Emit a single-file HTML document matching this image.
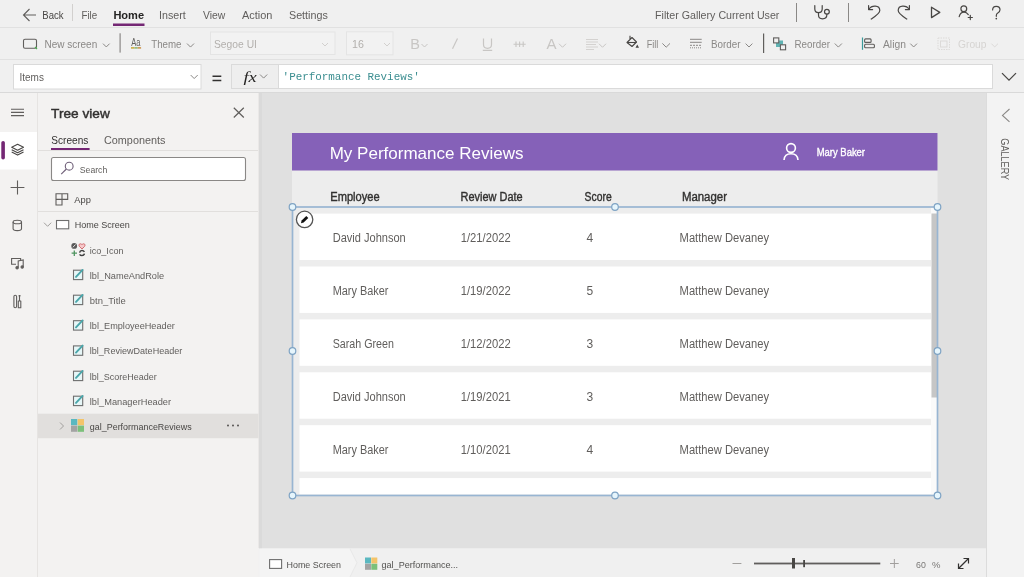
<!DOCTYPE html>
<html><head><meta charset="utf-8"><style>
*{margin:0;padding:0}html,body{width:1024px;height:577px;overflow:hidden;background:#f0f0f0}
svg{display:block;will-change:transform}text{white-space:pre}
</style></head><body>
<svg width="1024" height="577" viewBox="0 0 1024 577" font-family="Liberation Sans, sans-serif">
<rect x="0" y="0" width="1024" height="577" fill="#f0f0f0"/>
<rect x="0" y="27" width="1024" height="1" fill="#e1e1e1"/>
<rect x="0" y="59" width="1024" height="1" fill="#e1e1e1"/>
<rect x="0" y="92" width="1024" height="1" fill="#d9d9d9"/>
<path d="M23.5 15 H36 M29.5 9 L23.5 15 L29.5 21" fill="none" stroke="#605e5c" stroke-width="1.1"/>
<rect x="72" y="4" width="1" height="17" fill="#d2d0ce"/>
<rect x="113" y="23.5" width="31.5" height="2.5" fill="#742774"/>
<rect x="796" y="3" width="1" height="19" fill="#8a8886"/>
<g fill="none" stroke="#484644" stroke-width="1.2" stroke-linecap="round"><path d="M814.8 5.5 V9 Q814.8 12.6 818.5 12.6 Q822.2 12.6 822.2 9 V5.5"/><path d="M818.5 12.6 V15 Q818.5 18.8 822.5 18.8 Q826.9 18.8 826.9 14.2"/><circle cx="826.9" cy="11.7" r="2.4"/></g>
<rect x="848" y="3" width="1" height="19" fill="#8a8886"/>
<g fill="none" stroke="#484644" stroke-width="1.2" stroke-linecap="round" stroke-linejoin="round"><path d="M869 9.3 C871.5 5 879.8 4.8 879.8 10.5 C879.8 13.5 875 16.5 871.2 19"/><path d="M868.6 5.6 V9.6 H872.6"/></g>
<g fill="none" stroke="#484644" stroke-width="1.2" stroke-linecap="round" stroke-linejoin="round"><path d="M909 9.3 C906.5 5 898.2 4.8 898.2 10.5 C898.2 13.5 903 16.5 906.8 19"/><path d="M909.4 5.6 V9.6 H905.4"/></g>
<path d="M931.5 7.2 V17.6 L939.8 12.4 Z" fill="none" stroke="#484644" stroke-width="1.3" stroke-linejoin="round"/>
<g fill="none" stroke="#484644" stroke-width="1.2" stroke-linecap="round"><circle cx="963.8" cy="8.8" r="2.9"/><path d="M959.2 16.6 C960 13.5 962 12.2 964 12.2 C966 12.2 967.3 13.2 968.3 14.6"/><path d="M970.3 15.3 V19.6 M968.2 17.5 H972.4"/></g>
<path d="M992.6 10 Q992.6 6.3 996.3 6.3 Q1000 6.3 1000 9.8 Q1000 11.8 997.8 13 Q996.3 13.8 996.3 15.6 V16.3" fill="none" stroke="#484644" stroke-width="1.2" stroke-linecap="round"/><circle cx="996.3" cy="18.6" r="0.85" fill="#484644"/>
<rect x="23.5" y="39.3" width="13" height="9" rx="1.5" fill="none" stroke="#605e5c" stroke-width="1.1"/>
<path d="M35 47 L37 49" stroke="#4caf50" stroke-width="1.2"/>
<path d="M103 43.65 L106.30 46.95 L109.6 43.65" fill="none" stroke="#8a8886" stroke-width="1"/>
<rect x="119.5" y="33.3" width="1.2" height="19.3" fill="#8a8886"/>
<rect x="131" y="47.2" width="3.4" height="1.4" fill="#c9a227"/><rect x="134.4" y="47.2" width="3.3" height="1.4" fill="#7fb26a"/><rect x="137.7" y="47.2" width="3.4" height="1.4" fill="#c98a3a"/>
<path d="M187 43.55 L190.50 47.05 L194 43.55" fill="none" stroke="#8a8886" stroke-width="1"/>
<rect x="210.5" y="32" width="124.5" height="22.5" fill="#f2f2f2" stroke="#e4e4e4" stroke-width="1"/>
<path d="M322 43.00 L325.00 46.00 L328 43.00" fill="none" stroke="#d2d0ce" stroke-width="1"/>
<rect x="346.5" y="31.8" width="46.5" height="23" fill="#f2f2f2" stroke="#e4e4e4" stroke-width="1"/>
<path d="M384 43.00 L387.00 46.00 L390 43.00" fill="none" stroke="#d2d0ce" stroke-width="1"/>
<path d="M421.5 44.00 L424.50 47.00 L427.5 44.00" fill="none" stroke="#c8c6c4" stroke-width="1"/>
<path d="M457.5 38.5 L452.5 48.8" stroke="#c8c6c4" stroke-width="1.2"/>
<path d="M483.5 38.5 V44.5 Q483.5 48.3 487.5 48.3 Q491.5 48.3 491.5 44.5 V38.5 M482.8 50.3 H492.2" fill="none" stroke="#c8c6c4" stroke-width="1.2"/>
<path d="M513.5 44.3 H525.7 M516 41.5 V47 M519.6 41.5 V47 M523.2 41.5 V47" fill="none" stroke="#c8c6c4" stroke-width="1.1"/>
<path d="M559 43.75 L562.50 47.25 L566 43.75" fill="none" stroke="#c8c6c4" stroke-width="1"/>
<path d="M586 39.5 H598 M586 42 H598 M586 44.5 H596 M586 47 H598 M586 49.5 H594" fill="none" stroke="#d4d2d0" stroke-width="1"/>
<path d="M599 43.75 L602.50 47.25 L606 43.75" fill="none" stroke="#c8c6c4" stroke-width="1"/>
<g fill="none" stroke="#484644" stroke-width="1.1" stroke-linejoin="round"><path d="M630 35.8 V39.5 M627 42.5 L632 37.5 L636.5 42 L632 46.5 Z"/><path d="M627 42.5 H636.5"/></g>
<path d="M637.3 44.5 L635.5 47.8 H639 Z" fill="#484644"/>
<path d="M662.4 43.40 L666.20 47.20 L670 43.40" fill="none" stroke="#8a8886" stroke-width="1"/>
<g fill="none" stroke="#8a8886" stroke-width="1"><path d="M690 39.3 H701.7"/><path d="M690 42.3 H701.7"/><path d="M690 45.3 H701.7" stroke-dasharray="2 1"/><path d="M690 47.8 H701.7" stroke-dasharray="1 1"/></g>
<path d="M745.6 43.60 L749.00 47.00 L752.4 43.60" fill="none" stroke="#8a8886" stroke-width="1"/>
<rect x="763" y="33.5" width="1.2" height="19.5" fill="#605e5c"/>
<rect x="776" y="40.5" width="7" height="6.5" fill="#5fb3b3"/>
<rect x="773.6" y="37.9" width="5.2" height="5" fill="#f0f0f0" stroke="#605e5c" stroke-width="1.1"/>
<rect x="780.4" y="44.8" width="5.2" height="5" fill="#f0f0f0" stroke="#605e5c" stroke-width="1.1"/>
<path d="M834.8 43.52 L838.35 47.08 L841.9 43.52" fill="none" stroke="#8a8886" stroke-width="1"/>
<rect x="861.9" y="37.5" width="1.2" height="12.3" fill="#3a9a9a"/>
<rect x="864.6" y="38.9" width="6.5" height="3.5" rx="1" fill="none" stroke="#605e5c" stroke-width="1.1"/>
<rect x="864.6" y="44.2" width="9.8" height="3.5" rx="1" fill="none" stroke="#605e5c" stroke-width="1.1"/>
<path d="M910.3 43.62 L913.65 46.98 L917 43.62" fill="none" stroke="#8a8886" stroke-width="1"/>
<g fill="none" stroke="#dcdad8" stroke-width="1"><rect x="938" y="38" width="11.5" height="11.5" stroke-dasharray="1.5 1"/><rect x="940.5" y="41" width="6.5" height="6"/></g>
<path d="M991.4 43.65 L994.70 46.95 L998 43.65" fill="none" stroke="#dcdad8" stroke-width="1"/>
<rect x="13.5" y="64.5" width="187.5" height="24.5" fill="#ffffff" stroke="#dadada" stroke-width="1"/>
<path d="M190.7 75.05 L194.20 78.55 L197.7 75.05" fill="none" stroke="#8a8886" stroke-width="1"/>
<path d="M212.5 76.3 H221.3 M212.5 80.5 H221.3" stroke="#323130" stroke-width="1.5"/>
<rect x="231.5" y="64.5" width="47" height="24" fill="#eeeeee" stroke="#dadada" stroke-width="1"/>
<path d="M260 74.50 L263.60 78.10 L267.2 74.50" fill="none" stroke="#8a8886" stroke-width="1"/>
<rect x="278.5" y="64.5" width="714" height="24" fill="#ffffff" stroke="#dadada" stroke-width="1"/>
<path d="M1002 73.10 L1009.00 80.10 L1016 73.10" fill="none" stroke="#484644" stroke-width="1.3"/>
<rect x="0" y="93" width="37" height="484" fill="#f3f2f1"/>
<rect x="37" y="93" width="1" height="484" fill="#e6e4e2"/>
<rect x="0" y="132" width="37" height="37.5" fill="#ffffff"/>
<rect x="1.3" y="141" width="3.6" height="18.5" rx="1.8" fill="#742774"/>
<path d="M11 109.2 H24 M11 112.4 H24 M11 115.6 H24" stroke="#605e5c" stroke-width="1.1"/>
<g fill="none" stroke="#484644" stroke-width="1.1" stroke-linejoin="round"><path d="M17.6 144.3 L23.5 147.3 L17.6 150.3 L11.7 147.3 Z"/><path d="M11.7 149.7 L17.6 152.7 L23.5 149.7"/><path d="M11.7 152.1 L17.6 155.1 L23.5 152.1"/></g>
<path d="M17.5 180.6 V194.5 M10.6 187.5 H24.4" stroke="#605e5c" stroke-width="1.1"/>
<g fill="none" stroke="#605e5c" stroke-width="1.1"><ellipse cx="17.3" cy="222" rx="4.2" ry="1.8"/><path d="M13.1 222 V228.8 Q13.1 230.6 17.3 230.6 Q21.5 230.6 21.5 228.8 V222"/></g>
<g fill="none" stroke="#605e5c" stroke-width="1.1"><path d="M16 264.2 H11.6 V258.5 H20.6 V260"/><path d="M18.2 267.5 V261 L23.2 260 V266.8"/><circle cx="17.1" cy="267.8" r="1.2" fill="#605e5c"/><circle cx="22.2" cy="267" r="1.2" fill="#605e5c"/></g>
<g fill="none" stroke="#605e5c" stroke-width="1.1" stroke-linejoin="round"><path d="M13.9 296.5 Q13.9 295.2 15.2 295.2 Q16.6 295.2 16.6 296.5 V306.6 Q16.6 307.8 15.2 307.8 Q13.9 307.8 13.9 306.6 Z"/><path d="M19.5 295.2 V301"/><path d="M18.3 301 H20.8 V307.8 H18.3 Z"/></g>
<rect x="18.6" y="295.1" width="1.9" height="1.3" fill="#605e5c"/>
<rect x="38" y="93" width="220.5" height="484" fill="#f3f2f1"/>
<rect x="258.5" y="93" width="1" height="455" fill="#e1dfdd"/>
<path d="M233.8 107.8 L243.8 117.5 M243.8 107.8 L233.8 117.5" stroke="#605e5c" stroke-width="1.2"/>
<rect x="51" y="148" width="38.6" height="2.2" fill="#742774"/>
<rect x="38" y="150" width="220" height="1" fill="#e1dfdd"/>
<rect x="51.5" y="157.5" width="194" height="23" rx="2" fill="#ffffff" stroke="#8a8886" stroke-width="1.1"/>
<g fill="none" stroke="#6f5f78" stroke-width="1.1"><circle cx="69.2" cy="166.2" r="3.9"/><path d="M66.4 169 L61.2 174.2"/></g>
<g fill="none" stroke="#605e5c" stroke-width="1.1"><path d="M56 193.8 H62 V205 H56 Z M56 199.4 H62 M62 193.8 H67.7 V199.4 H62"/></g>
<rect x="38" y="211" width="220" height="1" fill="#e1dfdd"/>
<path d="M44 222.70 L47.60 226.30 L51.2 222.70" fill="none" stroke="#a19f9d" stroke-width="1"/>
<rect x="56.5" y="220.5" width="12.2" height="8.3" fill="#ffffff" stroke="#6e6e6e" stroke-width="1.1"/>
<circle cx="74.2" cy="245.9" r="2.9" fill="#5a5a5a"/><path d="M72.9 247.3 L75.5 244.5" stroke="#f3f2f1" stroke-width="0.9"/>
<path d="M82 249 L79.4 246.4 Q78.6 245 79.2 244.3 Q80.2 243.4 81.2 244 L82 244.7 L82.8 244 Q83.8 243.4 84.8 244.3 Q85.4 245 84.6 246.4 Z" fill="#f6c9cb" stroke="#d26f73" stroke-width="1"/>
<path d="M74.3 250.5 V255.9 M71.6 253.2 H77" stroke="#4f9460" stroke-width="1.3"/>
<path d="M79.6 252.6 Q80 250.6 82 250.6 Q83.6 250.6 84.4 251.8 M84.4 253.6 Q84 255.6 82 255.6 Q80.4 255.6 79.6 254.4" fill="none" stroke="#3f3f3f" stroke-width="1.5"/>
<rect x="73.5" y="270.20" width="9.2" height="9.4" fill="#e6f6f7" stroke="#6e6e6e" stroke-width="1.1"/>
<path d="M76 276.90 L82.6 269.90" stroke="#4aa6aa" stroke-width="1.9" stroke-linecap="round"/>
<rect x="73.5" y="295.20" width="9.2" height="9.4" fill="#e6f6f7" stroke="#6e6e6e" stroke-width="1.1"/>
<path d="M76 301.90 L82.6 294.90" stroke="#4aa6aa" stroke-width="1.9" stroke-linecap="round"/>
<rect x="73.5" y="320.70" width="9.2" height="9.4" fill="#e6f6f7" stroke="#6e6e6e" stroke-width="1.1"/>
<path d="M76 327.40 L82.6 320.40" stroke="#4aa6aa" stroke-width="1.9" stroke-linecap="round"/>
<rect x="73.5" y="345.90" width="9.2" height="9.4" fill="#e6f6f7" stroke="#6e6e6e" stroke-width="1.1"/>
<path d="M76 352.60 L82.6 345.60" stroke="#4aa6aa" stroke-width="1.9" stroke-linecap="round"/>
<rect x="73.5" y="371.20" width="9.2" height="9.4" fill="#e6f6f7" stroke="#6e6e6e" stroke-width="1.1"/>
<path d="M76 377.90 L82.6 370.90" stroke="#4aa6aa" stroke-width="1.9" stroke-linecap="round"/>
<rect x="73.5" y="396.20" width="9.2" height="9.4" fill="#e6f6f7" stroke="#6e6e6e" stroke-width="1.1"/>
<path d="M76 402.90 L82.6 395.90" stroke="#4aa6aa" stroke-width="1.9" stroke-linecap="round"/>
<rect x="38" y="413.7" width="220.5" height="24.5" fill="#e1dfdd"/>
<path d="M60 422.5 L63.5 426 L60 429.5" fill="none" stroke="#a19f9d" stroke-width="1"/>
<rect x="71" y="419" width="6.3" height="6.2" fill="#5bb8c0"/><rect x="77.7" y="419" width="6.3" height="6.2" fill="#f3c46a"/><rect x="71" y="425.6" width="6.3" height="6.2" fill="#a3a3a3"/><rect x="77.7" y="425.6" width="6.3" height="6.2" fill="#7cc07a"/>
<g fill="#484644"><circle cx="228" cy="425.5" r="0.9"/><circle cx="233" cy="425.5" r="0.9"/><circle cx="238" cy="425.5" r="0.9"/></g>
<rect x="259.5" y="93" width="727" height="455.5" fill="#e0e0e0"/>
<rect x="259" y="93" width="3" height="455.5" fill="#dadada"/>
<rect x="292" y="133" width="645.5" height="363" fill="#ededed"/>
<rect x="292" y="133" width="645.5" height="37.5" fill="#8561b8"/>
<g fill="none" stroke="#ffffff" stroke-width="1.6"><circle cx="791" cy="148" r="4.4"/><path d="M784 160 Q784.5 153.8 791 153.8 Q797.5 153.8 798 160"/></g>
<rect x="299.5" y="213.60" width="632" height="46.40" fill="#ffffff"/>
<rect x="299.5" y="266.50" width="632" height="46.40" fill="#ffffff"/>
<rect x="299.5" y="319.40" width="632" height="46.40" fill="#ffffff"/>
<rect x="299.5" y="372.30" width="632" height="46.40" fill="#ffffff"/>
<rect x="299.5" y="425.20" width="632" height="46.40" fill="#ffffff"/>
<rect x="299.5" y="478.10" width="632" height="16.40" fill="#ffffff"/>
<rect x="931" y="208" width="6.5" height="287" fill="#fafafa"/>
<rect x="931.5" y="213.5" width="5.5" height="184" fill="#c6c6c6"/>
<rect x="259.5" y="548.5" width="727" height="28.5" fill="#f0f0f0"/>
<path d="M259.5 548.8 H350 L357 562.8 L350 577 H259.5 Z" fill="#f4f4f4"/>
<path d="M350 548.8 L357 562.8 L350 577" fill="none" stroke="#e8e8e8" stroke-width="1"/>
<rect x="269.6" y="559.6" width="12" height="8.8" fill="#ffffff" stroke="#6e6e6e" stroke-width="1.1"/>
<rect x="365" y="557.5" width="6" height="6" fill="#5bb8c0"/><rect x="371.3" y="557.5" width="6" height="6" fill="#f3c46a"/><rect x="365" y="563.8" width="6" height="6" fill="#a3a3a3"/><rect x="371.3" y="563.8" width="6" height="6" fill="#7cc07a"/>
<path d="M732.5 563.5 H741.4 M890 563.5 H898.7 M894.35 559 V568" stroke="#a19f9d" stroke-width="1"/>
<rect x="754" y="562.6" width="126.3" height="1.8" fill="#605e5c"/>
<rect x="792" y="558" width="3" height="10.5" fill="#484644"/>
<rect x="803.2" y="560" width="1.8" height="7.2" fill="#484644"/>
<g fill="none" stroke="#323130" stroke-width="1.2"><path d="M958.5 568.5 L968.5 558.5"/><path d="M958.5 563.5 V568.5 H963.5 M963.5 558.5 H968.5 V563.5"/></g>
<rect x="986.5" y="93" width="37.5" height="484" fill="#f3f3f3"/>
<rect x="986" y="93" width="1" height="484" fill="#dcdcdc"/>
<path d="M1009.5 109 L1002.5 115.4 L1009.5 121.8" fill="none" stroke="#8a8886" stroke-width="1.1"/>
<text x="42.30" y="19.30" font-family="Liberation Sans" font-size="11.5" font-weight="normal" fill="#484644" textLength="21.25" lengthAdjust="spacingAndGlyphs" >Back</text>
<text x="81.40" y="19.30" font-family="Liberation Sans" font-size="11.5" font-weight="normal" fill="#605e5c" textLength="15.80" lengthAdjust="spacingAndGlyphs" >File</text>
<text x="113.40" y="19.30" font-family="Liberation Sans" font-size="11.5" font-weight="bold" fill="#252423" textLength="30.70" lengthAdjust="spacingAndGlyphs" >Home</text>
<text x="159.00" y="19.30" font-family="Liberation Sans" font-size="11.5" font-weight="normal" fill="#605e5c" textLength="26.70" lengthAdjust="spacingAndGlyphs" >Insert</text>
<text x="203.00" y="19.30" font-family="Liberation Sans" font-size="11.5" font-weight="normal" fill="#605e5c" textLength="22.30" lengthAdjust="spacingAndGlyphs" >View</text>
<text x="242.00" y="19.30" font-family="Liberation Sans" font-size="11.5" font-weight="normal" fill="#605e5c" textLength="30.40" lengthAdjust="spacingAndGlyphs" >Action</text>
<text x="289.00" y="19.30" font-family="Liberation Sans" font-size="11.5" font-weight="normal" fill="#605e5c" textLength="38.75" lengthAdjust="spacingAndGlyphs" >Settings</text>
<text x="655.00" y="19.30" font-family="Liberation Sans" font-size="11.5" font-weight="normal" fill="#605e5c" textLength="124.43" lengthAdjust="spacingAndGlyphs" >Filter Gallery Current User</text>
<text x="44.50" y="47.80" font-family="Liberation Sans" font-size="10.6" font-weight="normal" fill="#8a8886" textLength="52.69" lengthAdjust="spacingAndGlyphs" >New screen</text>
<text x="131.30" y="46.30" font-family="Liberation Sans" font-size="10" font-weight="normal" fill="#605e5c" textLength="9.26" lengthAdjust="spacingAndGlyphs" >Aa</text>
<text x="151.20" y="47.80" font-family="Liberation Sans" font-size="10.6" font-weight="normal" fill="#8a8886" textLength="30.29" lengthAdjust="spacingAndGlyphs" >Theme</text>
<text x="214.00" y="47.80" font-family="Liberation Sans" font-size="10.6" font-weight="normal" fill="#b3b0ad" textLength="42.94" lengthAdjust="spacingAndGlyphs" >Segoe UI</text>
<text x="352.00" y="47.80" font-family="Liberation Sans" font-size="10.6" font-weight="normal" fill="#b3b0ad" textLength="11.89" lengthAdjust="spacingAndGlyphs" >16</text>
<text x="410.20" y="48.90" font-family="Liberation Sans" font-size="14.5" font-weight="normal" fill="#c8c6c4" >B</text>
<text x="546.50" y="49.00" font-family="Liberation Sans" font-size="15" font-weight="normal" fill="#c8c6c4" >A</text>
<text x="646.70" y="47.80" font-family="Liberation Sans" font-size="10.6" font-weight="normal" fill="#8a8886" textLength="11.65" lengthAdjust="spacingAndGlyphs" >Fill</text>
<text x="711.00" y="47.80" font-family="Liberation Sans" font-size="10.6" font-weight="normal" fill="#8a8886" textLength="29.53" lengthAdjust="spacingAndGlyphs" >Border</text>
<text x="794.40" y="47.80" font-family="Liberation Sans" font-size="10.6" font-weight="normal" fill="#8a8886" textLength="35.53" lengthAdjust="spacingAndGlyphs" >Reorder</text>
<text x="883.00" y="47.80" font-family="Liberation Sans" font-size="10.6" font-weight="normal" fill="#8a8886" textLength="22.89" lengthAdjust="spacingAndGlyphs" >Align</text>
<text x="958.10" y="47.80" font-family="Liberation Sans" font-size="10.6" font-weight="normal" fill="#d6d4d2" textLength="28.39" lengthAdjust="spacingAndGlyphs" >Group</text>
<text x="19.50" y="80.90" font-family="Liberation Sans" font-size="11" font-weight="normal" fill="#605e5c" textLength="24.40" lengthAdjust="spacingAndGlyphs" >Items</text>
<text x="243.40" y="81.50" font-family="Liberation Serif" font-size="14" font-weight="normal" fill="#252423" textLength="13.40" lengthAdjust="spacingAndGlyphs" font-style="italic">fx</text>
<text x="282.60" y="79.90" font-family="Liberation Mono" font-size="10.5" font-weight="normal" fill="#3b8e90" textLength="137.20" lengthAdjust="spacingAndGlyphs" >'Performance Reviews'</text>
<text x="51.10" y="118.00" font-family="Liberation Sans" font-size="13.5" font-weight="normal" fill="#323130" textLength="58.65" lengthAdjust="spacingAndGlyphs" stroke="#323130" stroke-width="0.45">Tree view</text>
<text x="51.30" y="143.70" font-family="Liberation Sans" font-size="11" font-weight="normal" fill="#323130" textLength="37.00" lengthAdjust="spacingAndGlyphs" >Screens</text>
<text x="104.00" y="143.70" font-family="Liberation Sans" font-size="11" font-weight="normal" fill="#605e5c" textLength="61.40" lengthAdjust="spacingAndGlyphs" >Components</text>
<text x="79.80" y="172.60" font-family="Liberation Sans" font-size="9.5" font-weight="normal" fill="#605e5c" textLength="27.48" lengthAdjust="spacingAndGlyphs" >Search</text>
<text x="74.30" y="203.00" font-family="Liberation Sans" font-size="9.3" font-weight="normal" fill="#484644" textLength="16.57" lengthAdjust="spacingAndGlyphs" >App</text>
<text x="74.70" y="228.20" font-family="Liberation Sans" font-size="9.3" font-weight="normal" fill="#484644" textLength="55.17" lengthAdjust="spacingAndGlyphs" >Home Screen</text>
<text x="89.80" y="253.50" font-family="Liberation Sans" font-size="9.3" font-weight="normal" fill="#605e5c" textLength="33.67" lengthAdjust="spacingAndGlyphs" >ico_Icon</text>
<text x="89.80" y="278.50" font-family="Liberation Sans" font-size="9.3" font-weight="normal" fill="#605e5c" textLength="74.37" lengthAdjust="spacingAndGlyphs" >lbl_NameAndRole</text>
<text x="89.80" y="303.50" font-family="Liberation Sans" font-size="9.3" font-weight="normal" fill="#605e5c" textLength="35.87" lengthAdjust="spacingAndGlyphs" >btn_Title</text>
<text x="89.80" y="329.00" font-family="Liberation Sans" font-size="9.3" font-weight="normal" fill="#605e5c" textLength="85.00" lengthAdjust="spacingAndGlyphs" >lbl_EmployeeHeader</text>
<text x="89.80" y="354.20" font-family="Liberation Sans" font-size="9.3" font-weight="normal" fill="#605e5c" textLength="92.50" lengthAdjust="spacingAndGlyphs" >lbl_ReviewDateHeader</text>
<text x="89.80" y="379.50" font-family="Liberation Sans" font-size="9.3" font-weight="normal" fill="#605e5c" textLength="67.00" lengthAdjust="spacingAndGlyphs" >lbl_ScoreHeader</text>
<text x="89.80" y="404.50" font-family="Liberation Sans" font-size="9.3" font-weight="normal" fill="#605e5c" textLength="81.30" lengthAdjust="spacingAndGlyphs" >lbl_ManagerHeader</text>
<text x="89.80" y="429.80" font-family="Liberation Sans" font-size="9.3" font-weight="normal" fill="#484644" textLength="101.85" lengthAdjust="spacingAndGlyphs" >gal_PerformanceReviews</text>
<text x="329.70" y="158.60" font-family="Liberation Sans" font-size="17" font-weight="normal" fill="#ffffff" textLength="193.80" lengthAdjust="spacingAndGlyphs" >My Performance Reviews</text>
<text x="816.70" y="156.10" font-family="Liberation Sans" font-size="10" font-weight="normal" fill="#ffffff" textLength="48.33" lengthAdjust="spacingAndGlyphs" stroke="#ffffff" stroke-width="0.35">Mary Baker</text>
<text x="330.30" y="200.50" font-family="Liberation Sans" font-size="12" font-weight="normal" fill="#323130" textLength="49.37" lengthAdjust="spacingAndGlyphs" stroke="#323130" stroke-width="0.38">Employee</text>
<text x="460.60" y="200.50" font-family="Liberation Sans" font-size="12" font-weight="normal" fill="#323130" textLength="62.07" lengthAdjust="spacingAndGlyphs" stroke="#323130" stroke-width="0.38">Review Date</text>
<text x="584.60" y="200.50" font-family="Liberation Sans" font-size="12" font-weight="normal" fill="#323130" textLength="27.07" lengthAdjust="spacingAndGlyphs" stroke="#323130" stroke-width="0.38">Score</text>
<text x="681.90" y="200.50" font-family="Liberation Sans" font-size="12" font-weight="normal" fill="#323130" textLength="45.10" lengthAdjust="spacingAndGlyphs" stroke="#323130" stroke-width="0.38">Manager</text>
<text x="332.70" y="242.10" font-family="Liberation Sans" font-size="12" font-weight="normal" fill="#605e5c" textLength="73.07" lengthAdjust="spacingAndGlyphs" >David Johnson</text>
<text x="460.70" y="242.10" font-family="Liberation Sans" font-size="12" font-weight="normal" fill="#605e5c" textLength="49.97" lengthAdjust="spacingAndGlyphs" >1/21/2022</text>
<text x="586.60" y="242.10" font-family="Liberation Sans" font-size="12" font-weight="normal" fill="#605e5c" >4</text>
<text x="679.60" y="242.10" font-family="Liberation Sans" font-size="12" font-weight="normal" fill="#605e5c" textLength="89.40" lengthAdjust="spacingAndGlyphs" >Matthew Devaney</text>
<text x="332.70" y="295.00" font-family="Liberation Sans" font-size="12" font-weight="normal" fill="#605e5c" textLength="55.70" lengthAdjust="spacingAndGlyphs" >Mary Baker</text>
<text x="460.70" y="295.00" font-family="Liberation Sans" font-size="12" font-weight="normal" fill="#605e5c" textLength="49.97" lengthAdjust="spacingAndGlyphs" >1/19/2022</text>
<text x="586.60" y="295.00" font-family="Liberation Sans" font-size="12" font-weight="normal" fill="#605e5c" >5</text>
<text x="679.60" y="295.00" font-family="Liberation Sans" font-size="12" font-weight="normal" fill="#605e5c" textLength="89.40" lengthAdjust="spacingAndGlyphs" >Matthew Devaney</text>
<text x="332.70" y="347.90" font-family="Liberation Sans" font-size="12" font-weight="normal" fill="#605e5c" textLength="61.27" lengthAdjust="spacingAndGlyphs" >Sarah Green</text>
<text x="460.70" y="347.90" font-family="Liberation Sans" font-size="12" font-weight="normal" fill="#605e5c" textLength="49.97" lengthAdjust="spacingAndGlyphs" >1/12/2022</text>
<text x="586.60" y="347.90" font-family="Liberation Sans" font-size="12" font-weight="normal" fill="#605e5c" >3</text>
<text x="679.60" y="347.90" font-family="Liberation Sans" font-size="12" font-weight="normal" fill="#605e5c" textLength="89.40" lengthAdjust="spacingAndGlyphs" >Matthew Devaney</text>
<text x="332.70" y="400.80" font-family="Liberation Sans" font-size="12" font-weight="normal" fill="#605e5c" textLength="73.07" lengthAdjust="spacingAndGlyphs" >David Johnson</text>
<text x="460.70" y="400.80" font-family="Liberation Sans" font-size="12" font-weight="normal" fill="#605e5c" textLength="49.97" lengthAdjust="spacingAndGlyphs" >1/19/2021</text>
<text x="586.60" y="400.80" font-family="Liberation Sans" font-size="12" font-weight="normal" fill="#605e5c" >3</text>
<text x="679.60" y="400.80" font-family="Liberation Sans" font-size="12" font-weight="normal" fill="#605e5c" textLength="89.40" lengthAdjust="spacingAndGlyphs" >Matthew Devaney</text>
<text x="332.70" y="453.70" font-family="Liberation Sans" font-size="12" font-weight="normal" fill="#605e5c" textLength="55.70" lengthAdjust="spacingAndGlyphs" >Mary Baker</text>
<text x="460.70" y="453.70" font-family="Liberation Sans" font-size="12" font-weight="normal" fill="#605e5c" textLength="49.97" lengthAdjust="spacingAndGlyphs" >1/10/2021</text>
<text x="586.60" y="453.70" font-family="Liberation Sans" font-size="12" font-weight="normal" fill="#605e5c" >4</text>
<text x="679.60" y="453.70" font-family="Liberation Sans" font-size="12" font-weight="normal" fill="#605e5c" textLength="89.40" lengthAdjust="spacingAndGlyphs" >Matthew Devaney</text>
<text x="286.50" y="567.80" font-family="Liberation Sans" font-size="9.1" font-weight="normal" fill="#535250" textLength="54.56" lengthAdjust="spacingAndGlyphs" >Home Screen</text>
<text x="381.50" y="567.80" font-family="Liberation Sans" font-size="9.1" font-weight="normal" fill="#535250" textLength="76.63" lengthAdjust="spacingAndGlyphs" >gal_Performance...</text>
<text x="916.00" y="567.50" font-family="Liberation Sans" font-size="9.5" font-weight="normal" fill="#7a7876" textLength="9.78" lengthAdjust="spacingAndGlyphs" >60</text>
<text x="932.00" y="567.50" font-family="Liberation Sans" font-size="9.5" font-weight="normal" fill="#7a7876" >%</text>
<text x="138.30" y="-1001.30" font-family="Liberation Sans" font-size="11" font-weight="normal" fill="#605e5c" textLength="41.84" lengthAdjust="spacingAndGlyphs" transform="rotate(90)">GALLERY</text>
<rect x="292.5" y="207" width="645" height="288.5" fill="none" stroke="#98b5d2" stroke-width="1.7"/>
<circle cx="292.5" cy="207" r="3.3" fill="#e6f5fc" stroke="#7ea3c4" stroke-width="1.2"/>
<circle cx="615" cy="207" r="3.3" fill="#e6f5fc" stroke="#7ea3c4" stroke-width="1.2"/>
<circle cx="937.5" cy="207" r="3.3" fill="#e6f5fc" stroke="#7ea3c4" stroke-width="1.2"/>
<circle cx="292.5" cy="351" r="3.3" fill="#e6f5fc" stroke="#7ea3c4" stroke-width="1.2"/>
<circle cx="937.5" cy="351" r="3.3" fill="#e6f5fc" stroke="#7ea3c4" stroke-width="1.2"/>
<circle cx="292.5" cy="495.5" r="3.3" fill="#e6f5fc" stroke="#7ea3c4" stroke-width="1.2"/>
<circle cx="615" cy="495.5" r="3.3" fill="#e6f5fc" stroke="#7ea3c4" stroke-width="1.2"/>
<circle cx="937.5" cy="495.5" r="3.3" fill="#e6f5fc" stroke="#7ea3c4" stroke-width="1.2"/>
<circle cx="304.6" cy="219.4" r="8.2" fill="#ffffff" stroke="#555555" stroke-width="1.3"/>
<path d="M301 223.3 L301.6 220.6 L306.3 215.9 L308.3 217.9 L303.6 222.6 Z" fill="#111111"/>
</svg></body></html>
